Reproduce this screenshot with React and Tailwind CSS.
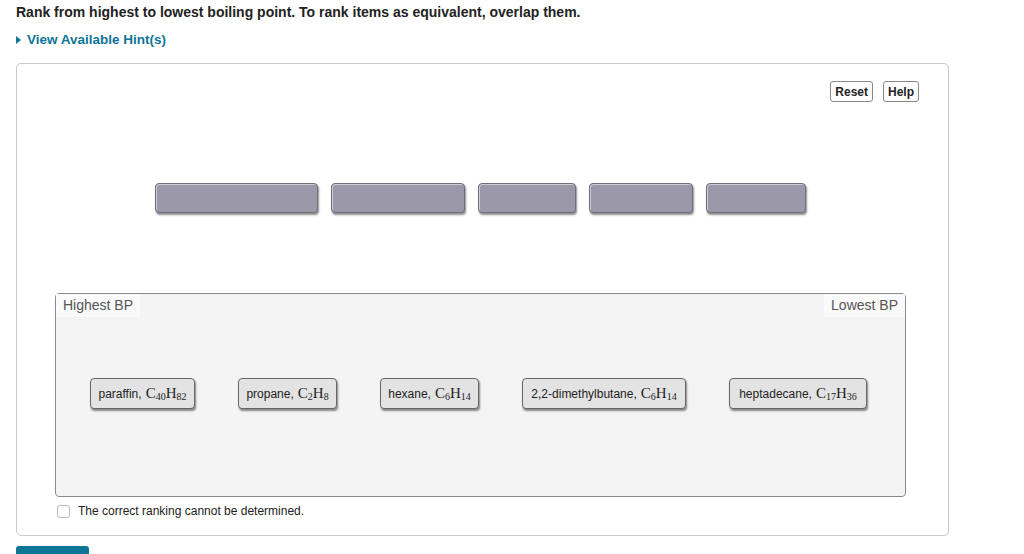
const items = [
  { name: "paraffin", c: "40", h: "82", w: "w-[105px]" },
  { name: "propane", c: "2", h: "8", w: "w-[99px]" },
  { name: "hexane", c: "6", h: "14", w: "w-[99px]" },
  { name: "2,2-dimethylbutane", c: "6", h: "14", w: "w-[164px]" },
  { name: "heptadecane", c: "17", h: "36", w: "w-[138px]" },
];

const slots = ["w-[163px]", "w-[134px]", "w-[98px]", "w-[104px]", "w-[100px]"];

const Formula = ({ c, h }) => (
  <span className="font-['Liberation_Serif',serif] text-[15px] text-[#222]">
    C<span className="text-[10px] align-[-2px]">{c}</span>H<span className="text-[10px] align-[-2px]">{h}</span>
  </span>
);

export default function App() {
  return (
    <div className="w-[1024px] h-[554px] overflow-hidden bg-white font-['Liberation_Sans',Arial,sans-serif] text-[#333]">
      <div className="pl-4 pt-[4px]">
        <p className="text-[14px] font-bold leading-[16px] text-[#222]">
          Rank from highest to lowest boiling point. To rank items as equivalent, overlap them.
        </p>
        <div className="mt-[12px] flex items-center gap-[6px] text-[13.5px] font-bold leading-[16px] text-[#0f7598]">
          <svg width="5" height="8" viewBox="0 0 5 8"><path d="M0 0 L5 4 L0 8 Z" fill="#0f7598" /></svg>
          <span>View Available Hint(s)</span>
        </div>
      </div>

      <div className="ml-4 mt-[15px] w-[933px] h-[473px] rounded-[5px] border border-[#c8c8c8] flex flex-col">
        <div className="flex justify-end gap-[10px] pr-[29px] pt-[17px]">
          <button className="h-[21px] px-[4px] rounded-[3px] border border-[#888] bg-white text-[12px] font-bold text-[#222] leading-none">Reset</button>
          <button className="h-[21px] px-[4px] rounded-[3px] border border-[#888] bg-white text-[12px] font-bold text-[#222] leading-none">Help</button>
        </div>

        <div className="mt-[81px] ml-[138px] flex gap-[13px]">
          {slots.map((w, i) => (
            <div key={i} className={`${w} h-[30px] rounded-[4px] bg-[#9b99a9] border border-[#6f6e7a] shadow-[1px_2px_2px_rgba(0,0,0,0.45),inset_1px_1px_0_rgba(255,255,255,0.5)]`} />
          ))}
        </div>

        <div className="mt-[80px] ml-[38px] w-[851px] h-[204px] rounded-[4px] border border-[#8a8a8a] bg-[#f4f4f4] flex flex-col">
          <div className="flex justify-between">
            <div className="bg-[#fafafa] px-[7px] h-[23px] flex items-center text-[14px] text-[#555]">Highest BP</div>
            <div className="bg-[#fafafa] px-[7px] h-[23px] flex items-center text-[14px] text-[#555]">Lowest BP</div>
          </div>
          <div className="mt-[61px] pl-[34px] flex gap-[43px]">
            {items.map((it) => (
              <div key={it.name} className={`${it.w} h-[31px] rounded-[4px] border border-[#666] bg-[#e3e3e3] shadow-[1px_2px_2px_rgba(0,0,0,0.45)] flex items-center justify-center gap-[4px] text-[12px] text-[#222]`}>
                <span>{it.name},</span>
                <Formula c={it.c} h={it.h} />
              </div>
            ))}
          </div>
        </div>

        <label className="mt-[5px] ml-[40px] flex items-center gap-[8px] text-[12px] text-[#222]">
          <span className="w-[13px] h-[13px] rounded-[3px] border border-[#bbb] bg-white" />
          <span>The correct ranking cannot be determined.</span>
        </label>
      </div>

      <div className="ml-4 mt-[10px] w-[73px] h-[20px] rounded-t-[3px] bg-[#0f7598]" />
    </div>
  );
}
